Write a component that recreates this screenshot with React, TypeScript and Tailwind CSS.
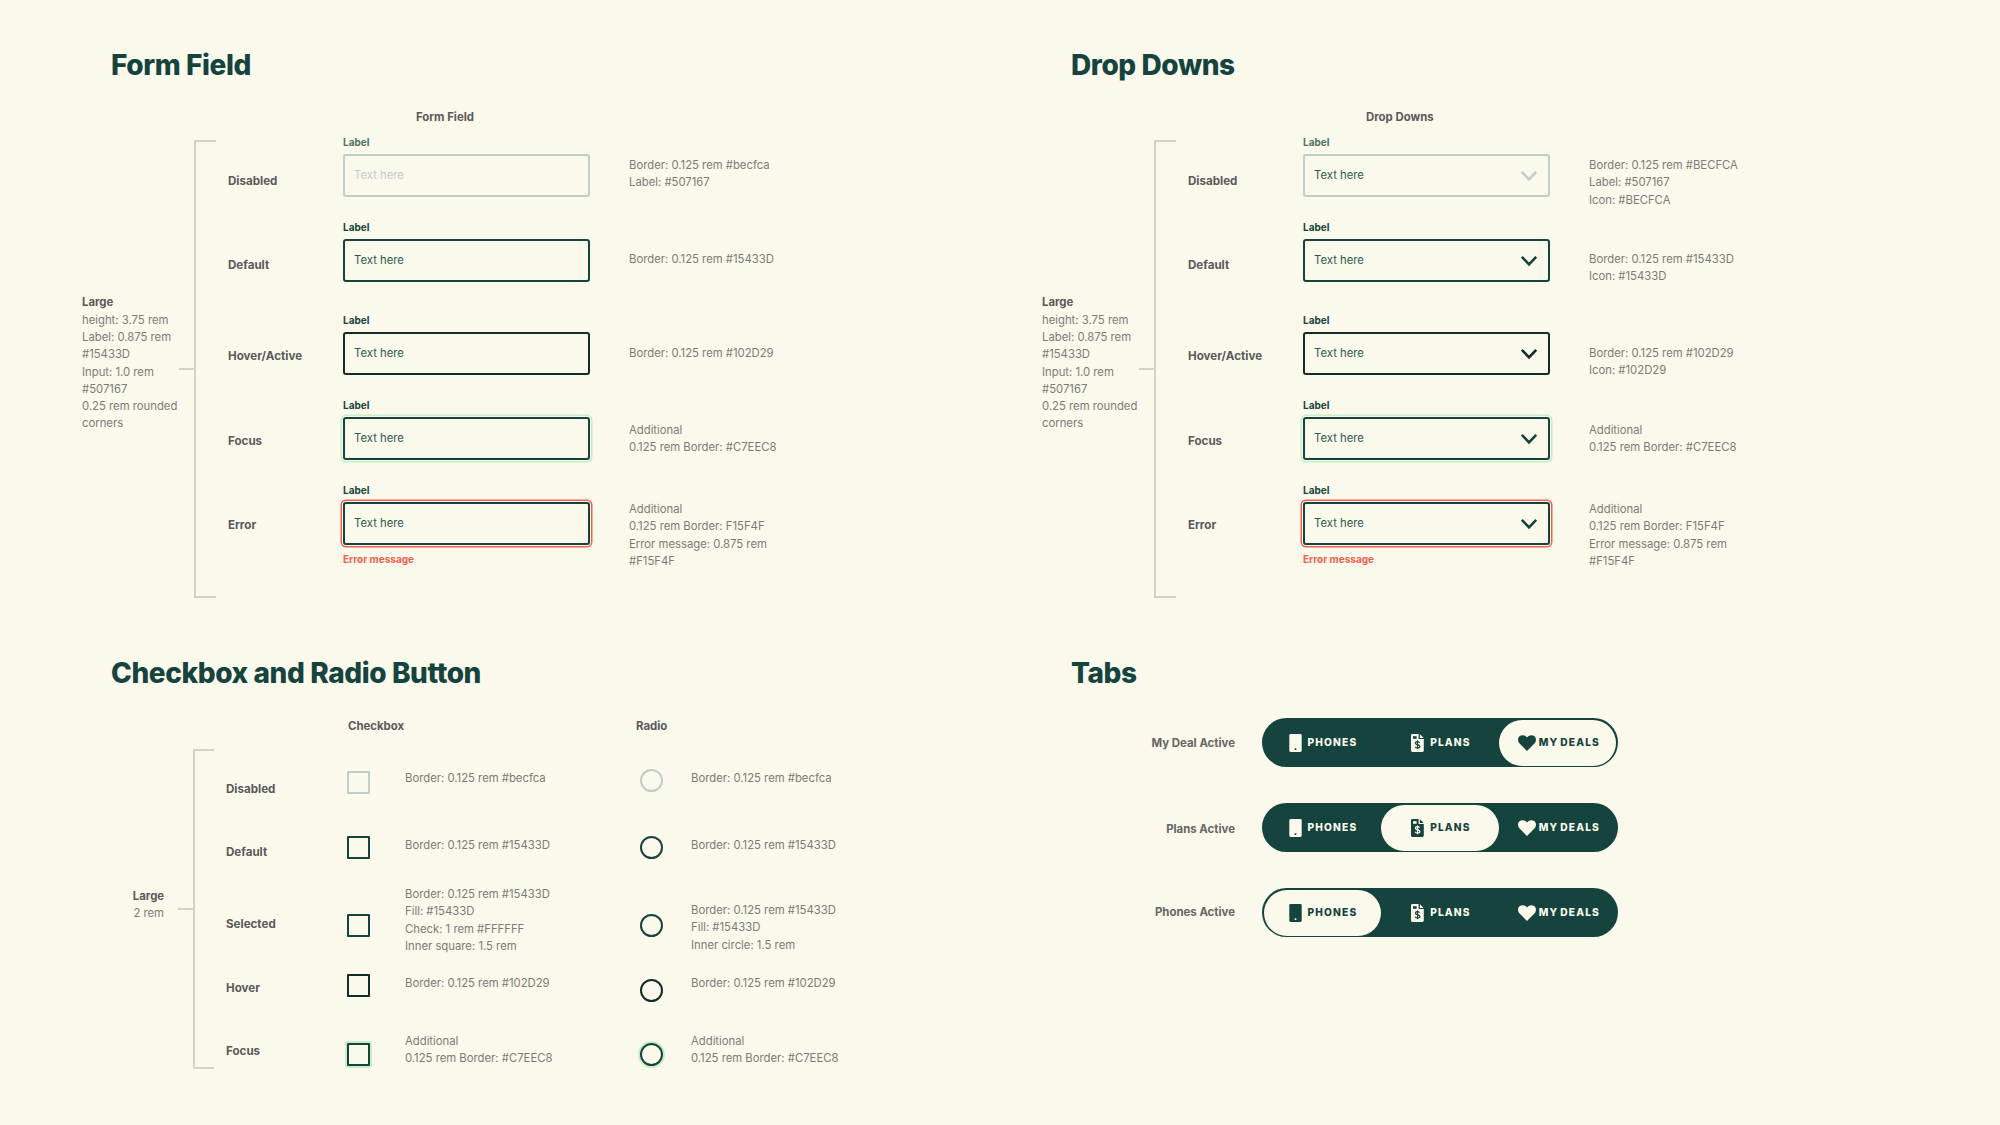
import React from "react";

const font = "font-['Inter','Liberation_Sans',sans-serif]";
const bracketLine = "border-[#d3d3c9]";

function Title({ children }: { children: React.ReactNode }) {
  return <h2 className="ml-[111px] h-[34px] text-[28px] leading-[34px] font-extrabold tracking-[-0.4px] text-[#15433D]">{children}</h2>;
}

function Note({ lines, className = "" }: { lines: string[]; className?: string }) {
  return (
    <div className={"text-[11.3px] leading-[17.3px] text-[#7c7c76] " + className}>
      {lines.map((l, i) => <div key={i}>{l}</div>)}
    </div>
  );
}

function Chevron({ color }: { color: string }) {
  return (
    <svg width="18" height="12" viewBox="0 0 18 12" fill="none" stroke={color} strokeWidth="2.6">
      <path d="M1.8 1.8 L9 9.4 L16.2 1.8" />
    </svg>
  );
}

type FieldRow = {
  name: string;
  rowCls: string;
  labelCls: string;
  noteCls: string;
  fieldLabelCls: string;
  boxCls: string;
  textCls: string;
  iconColor: string;
  notes: string[];
  dropNotes: string[];
  error?: boolean;
};

const fieldRows: FieldRow[] = [
  {
    name: "Disabled", rowCls: "h-[85px]", labelCls: "mt-[39px]", noteCls: "mt-[22px]",
    fieldLabelCls: "text-[#507167]", boxCls: "border-[#becfca]", textCls: "text-[#becfca]", iconColor: "#becfca",
    notes: ["Border: 0.125 rem #becfca", "Label: #507167"],
    dropNotes: ["Border: 0.125 rem #BECFCA", "Label: #507167", "Icon: #BECFCA"],
  },
  {
    name: "Default", rowCls: "h-[93px]", labelCls: "mt-[38px]", noteCls: "mt-[31px]",
    fieldLabelCls: "text-[#15433D]", boxCls: "border-[#15433D]", textCls: "text-[#2f5a52]", iconColor: "#15433D",
    notes: ["Border: 0.125 rem #15433D"],
    dropNotes: ["Border: 0.125 rem #15433D", "Icon: #15433D"],
  },
  {
    name: "Hover/Active", rowCls: "h-[85px]", labelCls: "mt-[36px]", noteCls: "mt-[32px]",
    fieldLabelCls: "text-[#15433D]", boxCls: "border-[#102D29]", textCls: "text-[#2f5a52]", iconColor: "#102D29",
    notes: ["Border: 0.125 rem #102D29"],
    dropNotes: ["Border: 0.125 rem #102D29", "Icon: #102D29"],
  },
  {
    name: "Focus", rowCls: "h-[85px]", labelCls: "mt-[36px]", noteCls: "mt-[24px]",
    fieldLabelCls: "text-[#15433D]", boxCls: "border-[#15433D] shadow-[0_0_0_1px_#fbf8ec,0_0_0_2.5px_#c7eec8]", textCls: "text-[#2f5a52]", iconColor: "#15433D",
    notes: ["Additional", "0.125 rem Border: #C7EEC8"],
    dropNotes: ["Additional", "0.125 rem Border: #C7EEC8"],
  },
  {
    name: "Error", rowCls: "h-[120px]", labelCls: "mt-[35px]", noteCls: "mt-[18px]",
    fieldLabelCls: "text-[#15433D]", boxCls: "border-[#15433D] shadow-[0_0_0_1px_#fbf8ec,0_0_0_2.5px_#F15F4F]", textCls: "text-[#2f5a52]", iconColor: "#15433D",
    notes: ["Additional", "0.125 rem Border: F15F4F", "Error message: 0.875 rem", "#F15F4F"],
    dropNotes: ["Additional", "0.125 rem Border: F15F4F", "Error message: 0.875 rem", "#F15F4F"],
    error: true,
  },
];

function LargeSpec() {
  return (
    <div className="flex items-center ml-[82px] mt-[5px]">
      <div className="w-[97px] mb-[11px] text-[11.3px] leading-[17.3px] text-[#7c7c76]">
        <div className="font-bold text-[#5a5a5a]">Large</div>
        <div>height: 3.75 rem</div>
        <div>Label: 0.875 rem</div>
        <div>#15433D</div>
        <div>Input: 1.0 rem</div>
        <div>#507167</div>
        <div>0.25 rem rounded</div>
        <div>corners</div>
      </div>
      <div className={"w-[15px] border-t-2 " + bracketLine} />
      <div className={"w-[22px] h-[458px] border-l-2 border-t-2 border-b-2 " + bracketLine} />
    </div>
  );
}

function FieldSection({ title, sub, subCls, dropdown }: { title: string; sub: string; subCls: string; dropdown?: boolean }) {
  return (
    <section className="pt-[48px]">
      <Title>{title}</Title>
      <div className={"mt-[28px] h-[14px] text-[11.4px] leading-[14px] font-bold text-[#5a5a5a] " + subCls}>{sub}</div>
      <div className="flex items-start mt-[11px]">
        <LargeSpec />
        <div className="ml-[12px]">
          {fieldRows.map((r) => (
            <div key={r.name} className={"flex items-start " + r.rowCls}>
              <div className={"w-[115px] h-[14px] text-[11.6px] leading-[14px] font-bold text-[#5a5a5a] " + r.labelCls}>{r.name}</div>
              <div className="w-[247px]">
                <div className={"h-[14px] mb-[5px] text-[10px] leading-[14px] font-bold " + r.fieldLabelCls}>Label</div>
                <div className={"flex items-center justify-between h-[43px] pl-[9px] pr-[10px] rounded-[3px] border-2 " + r.boxCls}>
                  <span className={"text-[11.3px] " + (dropdown ? "text-[#2f5a52]" : r.textCls)}>Text here</span>
                  {dropdown && <Chevron color={r.iconColor} />}
                </div>
                {r.error && <div className="mt-[7px] text-[10px] leading-[14px] font-bold text-[#F15F4F]">Error message</div>}
              </div>
              <Note lines={dropdown ? r.dropNotes : r.notes} className={"ml-[39px] " + r.noteCls} />
            </div>
          ))}
        </div>
      </div>
    </section>
  );
}

type CheckRow = {
  name: string;
  rowCls: string;
  labelCls: string;
  cbCls: string;
  noteCls: string;
  radioCls: string;
  note2Cls: string;
  notes: string[];
  notes2: string[];
};

const ring = "shadow-[0_0_0_2px_#c7eec8]";

const checkRows: CheckRow[] = [
  {
    name: "Disabled", rowCls: "h-[66px]", labelCls: "mt-[22px]", cbCls: "mt-[11px] border-[#becfca]",
    noteCls: "mt-[10px]", radioCls: "mt-[9px] border-[#becfca]", note2Cls: "mt-[10px]",
    notes: ["Border: 0.125 rem #becfca"], notes2: ["Border: 0.125 rem #becfca"],
  },
  {
    name: "Default", rowCls: "h-[59px]", labelCls: "mt-[19px]", cbCls: "mt-[10px] border-[#15433D]",
    noteCls: "mt-[11px]", radioCls: "mt-[10px] border-[#15433D]", note2Cls: "mt-[11px]",
    notes: ["Border: 0.125 rem #15433D"], notes2: ["Border: 0.125 rem #15433D"],
  },
  {
    name: "Selected", rowCls: "h-[81px]", labelCls: "mt-[32px]", cbCls: "mt-[29px] border-[#15433D]",
    noteCls: "mt-[1px]", radioCls: "mt-[29px] border-[#15433D]", note2Cls: "mt-[17px]",
    notes: ["Border: 0.125 rem #15433D", "Fill: #15433D", "Check: 1 rem #FFFFFF", "Inner square: 1.5 rem"],
    notes2: ["Border: 0.125 rem #15433D", "Fill: #15433D", "Inner circle: 1.5 rem"],
  },
  {
    name: "Hover", rowCls: "h-[64px]", labelCls: "mt-[15px]", cbCls: "mt-[8px] border-[#102D29]",
    noteCls: "mt-[9px]", radioCls: "mt-[13px] border-[#102D29]", note2Cls: "mt-[9px]",
    notes: ["Border: 0.125 rem #102D29"], notes2: ["Border: 0.125 rem #102D29"],
  },
  {
    name: "Focus", rowCls: "h-[64px]", labelCls: "mt-[14px]", cbCls: "mt-[13px] border-[#15433D] " + ring,
    noteCls: "mt-[3px]", radioCls: "mt-[13px] border-[#15433D] " + ring, note2Cls: "mt-[3px]",
    notes: ["Additional", "0.125 rem Border: #C7EEC8"], notes2: ["Additional", "0.125 rem Border: #C7EEC8"],
  },
];

function CheckSection() {
  return (
    <section className="pt-[48px]">
      <Title>Checkbox and Radio Button</Title>
      <div className="flex mt-[29px] pl-[348px] h-[14px] text-[11.4px] leading-[14px] font-bold text-[#5a5a5a]">
        <div className="w-[288px]">Checkbox</div>
        <div>Radio</div>
      </div>
      <div className="flex items-start">
        <div className="flex items-center ml-[100px] mt-[16px]">
          <div className="w-[64px] mb-[8px] text-right text-[11.3px] leading-[17.3px] text-[#7c7c76]">
            <div className="font-bold text-[#5a5a5a]">Large</div>
            <div>2 rem</div>
          </div>
          <div className={"w-[15px] ml-[14px] border-t-2 " + bracketLine} />
          <div className={"w-[21px] h-[320px] border-l-2 border-t-2 border-b-2 " + bracketLine} />
        </div>
        <div className="ml-[12px] mt-[27px]">
          {checkRows.map((r) => (
            <div key={r.name} className={"grid grid-cols-[121px_58px_235px_51px_240px] items-start " + r.rowCls}>
              <div className={"h-[14px] text-[11.6px] leading-[14px] font-bold text-[#5a5a5a] " + r.labelCls}>{r.name}</div>
              <div className={"w-[23px] h-[23px] border-2 rounded-[1px] " + r.cbCls} />
              <Note lines={r.notes} className={r.noteCls} />
              <div className={"w-[23px] h-[23px] border-2 rounded-full " + r.radioCls} />
              <Note lines={r.notes2} className={r.note2Cls} />
            </div>
          ))}
        </div>
      </div>
    </section>
  );
}

function PhoneIcon({ fg, bg }: { fg: string; bg: string }) {
  return (
    <svg width="13" height="18" viewBox="0 0 13 18" className="shrink-0">
      <rect x="0.3" y="0" width="12.4" height="18" rx="1.4" fill={fg} />
      <rect x="5.6" y="14.2" width="1.8" height="1.8" rx="0.4" fill={bg} />
    </svg>
  );
}

function PlansIcon({ fg, bg }: { fg: string; bg: string }) {
  return (
    <svg width="13" height="18" viewBox="0 0 13 18" className="shrink-0">
      <path d="M1.4 0 H7.6 V4.9 H12.8 V16.6 A1.4 1.4 0 0 1 11.4 18 H1.4 A1.4 1.4 0 0 1 0 16.6 V1.4 A1.4 1.4 0 0 1 1.4 0 Z" fill={fg} />
      <path d="M8.9 0.2 L12.7 3.9 H8.9 Z" fill={fg} />
      <rect x="2" y="2.2" width="3.6" height="2.6" fill={bg} />
      <path d="M8.6 8.6 C8 7.9 7.2 7.7 6.3 7.7 C5.2 7.7 4.4 8.3 4.4 9.2 C4.4 11.2 8.8 10.3 8.8 12.4 C8.8 13.4 7.8 13.9 6.6 13.9 C5.6 13.9 4.7 13.5 4.1 12.8" fill="none" stroke={bg} strokeWidth="1.3" />
      <path d="M6.5 6.4 V15.2" stroke={bg} strokeWidth="1.1" />
    </svg>
  );
}

function HeartIcon({ fg }: { fg: string }) {
  return (
    <svg width="18" height="16" viewBox="0 0 18 16" className="shrink-0">
      <path d="M9 16 L1.6 8.6 C-0.5 6.4 -0.4 3 1.5 1.3 C3.5 -0.5 6.8 -0.3 9 2.4 C11.2 -0.3 14.5 -0.5 16.5 1.3 C18.4 3 18.5 6.4 16.4 8.6 Z" fill={fg} />
    </svg>
  );
}

const dark = "#15433D";
const page = "#fbf8ec";

function Tab({ kind, active }: { kind: "phones" | "plans" | "deals"; active: boolean }) {
  const fg = active ? dark : page;
  const bg = active ? page : dark;
  const seg = "w-[117.67px] shrink-0 whitespace-nowrap flex items-center rounded-full " + (active ? "bg-[#fbf8ec] text-[#15433D] " : "text-[#fbf8ec] ");
  const txt = "text-[10.2px] leading-[14px] font-extrabold tracking-[1.15px] -mt-[1px]";
  if (kind === "phones")
    return (
      <div className={seg + "pl-[25px] gap-[6px]"}>
        <PhoneIcon fg={fg} bg={bg} />
        <span className={txt}>PHONES</span>
      </div>
    );
  if (kind === "plans")
    return (
      <div className={seg + "pl-[30px] gap-[6px]"}>
        <PlansIcon fg={fg} bg={bg} />
        <span className={txt}>PLANS</span>
      </div>
    );
  return (
    <div className={seg + "pl-[19px] gap-[3px]"}>
      <HeartIcon fg={fg} />
      <span className={txt + " [word-spacing:-1.5px]"}>MY DEALS</span>
    </div>
  );
}

function TabRow({ label, active, labelCls, className }: { label: string; active: string; labelCls: string; className: string }) {
  return (
    <div className={"flex items-center " + className}>
      <div className={"w-[275px] text-right text-[11.4px] font-bold text-[#666663] " + labelCls}>{label}</div>
      <div className="ml-[27px] w-[356px] h-[49px] p-[1.5px] flex rounded-full bg-[#15433D]">
        <Tab kind="phones" active={active === "phones"} />
        <Tab kind="plans" active={active === "plans"} />
        <Tab kind="deals" active={active === "deals"} />
      </div>
    </div>
  );
}

function TabsSection() {
  return (
    <section className="pt-[48px]">
      <Title>Tabs</Title>
      <TabRow label="My Deal Active" active="deals" labelCls="pt-[3px]" className="mt-[28px]" />
      <TabRow label="Plans Active" active="plans" labelCls="pt-[5px]" className="mt-[36px]" />
      <TabRow label="Phones Active" active="phones" labelCls="" className="mt-[36px]" />
    </section>
  );
}

export default function App() {
  return (
    <div className={"w-[2000px] h-[1125px] overflow-hidden bg-[#fbf8ec] grid grid-cols-[960px_1040px] grid-rows-[608px_517px] " + font}>
      <FieldSection title="Form Field" sub="Form Field" subCls="ml-[416px]" />
      <FieldSection title="Drop Downs" sub="Drop Downs" subCls="ml-[406px]" dropdown />
      <CheckSection />
      <TabsSection />
    </div>
  );
}
